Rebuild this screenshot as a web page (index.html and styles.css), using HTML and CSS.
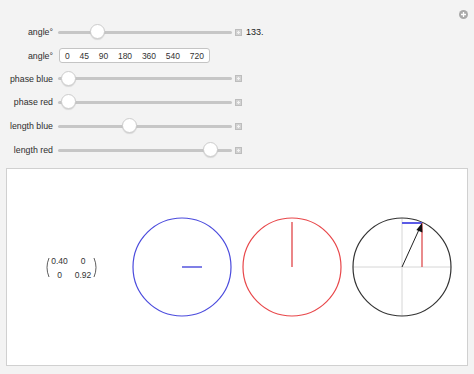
FILE: index.html
```html
<!DOCTYPE html>
<html lang="en">
<head>
    <meta charset="UTF-8">
    <title>Phase and length</title>
    <link rel="stylesheet" href="styles.css">
</head>
<body>
    <div class="panel">
        <span class="more-btn">
            <svg width="9" height="9" viewBox="0 0 9 9">
                <circle cx="4.5" cy="4.5" r="4.5" fill="#a9a9a9"/>
                <path d="M4.5 2v5M2 4.5h5" stroke="#fff" stroke-width="1.3"/>
            </svg>
        </span>

        <div class="controls">
            <div class="row row-tall">
                <label class="lbl">angle°</label>
                <div class="slider"><div class="track"></div><div class="thumb" style="left: 31.5px"></div></div>
                <span class="step"></span>
                <span class="val">133.</span>
            </div>
            <div class="row row-mid">
                <label class="lbl">angle°</label>
                <div class="setter">
                    <span>0</span><span>45</span><span>90</span><span>180</span><span>360</span><span>540</span><span>720</span>
                </div>
            </div>
            <div class="row row-mid">
                <label class="lbl">phase blue</label>
                <div class="slider"><div class="track"></div><div class="thumb" style="left: 2.5px"></div></div>
                <span class="step"></span>
            </div>
            <div class="row row-tall">
                <label class="lbl">phase red</label>
                <div class="slider"><div class="track"></div><div class="thumb" style="left: 2.5px"></div></div>
                <span class="step"></span>
            </div>
            <div class="row row-tall">
                <label class="lbl">length blue</label>
                <div class="slider"><div class="track"></div><div class="thumb" style="left: 63.5px"></div></div>
                <span class="step"></span>
            </div>
            <div class="row row-tall">
                <label class="lbl">length red</label>
                <div class="slider"><div class="track"></div><div class="thumb" style="left: 144.5px"></div></div>
                <span class="step"></span>
            </div>
        </div>

        <div class="output">
            <svg width="460" height="196" viewBox="0 0 460 196">
                <!-- matrix -->
                <path d="M42 89 Q38 98.5 42 108" fill="none" stroke="#333" stroke-width="0.8"/>
                <path d="M87 89 Q91 98.5 87 108" fill="none" stroke="#333" stroke-width="0.8"/>
                <text class="mat" x="52.5" y="94.5" text-anchor="middle">0.40</text>
                <text class="mat" x="76" y="94.5" text-anchor="middle">0</text>
                <text class="mat" x="52.5" y="108.5" text-anchor="middle">0</text>
                <text class="mat" x="76" y="108.5" text-anchor="middle">0.92</text>

                <!-- blue -->
                <circle cx="175" cy="98" r="49" fill="none" stroke="#4b4bdd" stroke-width="1.2"/>
                <line x1="175" y1="98" x2="195" y2="98" stroke="#3a3ad8" stroke-width="1.3"/>

                <!-- red -->
                <circle cx="285" cy="98" r="49" fill="none" stroke="#e8474a" stroke-width="1.2"/>
                <line x1="285" y1="98" x2="285" y2="53" stroke="#e04448" stroke-width="1.3"/>

                <!-- combined -->
                <line x1="346" y1="98" x2="444" y2="98" stroke="#d6d6d6" stroke-width="1"/>
                <line x1="395" y1="49" x2="395" y2="147" stroke="#d6d6d6" stroke-width="1"/>
                <circle cx="395" cy="98" r="49" fill="none" stroke="#333" stroke-width="1.2"/>
                <line x1="395" y1="54" x2="415" y2="54" stroke="#5b5be6" stroke-width="2"/>
                <line x1="415" y1="98" x2="415" y2="54" stroke="#e05a5c" stroke-width="1.4"/>
                <line x1="395" y1="98" x2="412.4" y2="59.8" stroke="#222" stroke-width="1"/>
                <path d="M415 54 L415.4 63.6 L409.4 60.9 Z" fill="#111"/>
            </svg>
        </div>
    </div>
</body>
</html>
```

FILE: styles.css
```css
body {
    margin: 0;
    background: #f3f3f3;
    font-family: 'Liberation Sans', Arial, sans-serif;
    font-size: 8.8px;
    color: #2e2e2e;
}

.panel {
    position: relative;
    width: 474px;
    height: 374px;
}

.more-btn {
    position: absolute;
    top: 10px;
    right: 6px;
    line-height: 0;
}

.controls {
    padding-top: 20px;
}

.row {
    display: flex;
    align-items: center;
}
.row-tall {
    height: 24px;
}
.row-mid {
    height: 23px;
}

.lbl {
    width: 53px;
    margin-right: 5px;
    text-align: right;
    white-space: nowrap;
}

.slider {
    position: relative;
    display: flex;
    align-items: center;
    width: 174px;
    height: 100%;
}
.track {
    flex: 1;
    height: 3px;
    border-radius: 2px;
    background: #c6c6c6;
}
.thumb {
    position: absolute;
    top: 50%;
    width: 15px;
    height: 15px;
    margin-top: -8px;
    box-sizing: border-box;
    border-radius: 50%;
    background: #fff;
    border: 1px solid #cdcdcd;
    box-shadow: 0 1px 1px rgba(0, 0, 0, 0.12);
}

.step {
    position: relative;
    width: 7px;
    height: 7px;
    margin-left: 3px;
    box-sizing: border-box;
    border: 1px solid #bdbdbd;
    background: #d2d2d2;
}
.step::before,
.step::after {
    content: "";
    position: absolute;
    background: #f2f2f2;
}
.step::before {
    left: 1px;
    top: 2px;
    width: 3px;
    height: 1px;
}
.step::after {
    left: 2px;
    top: 1px;
    width: 1px;
    height: 3px;
}

.val {
    margin-left: 4px;
    font-size: 9px;
    color: #222;
}

.setter {
    display: flex;
    align-items: center;
    height: 15px;
    margin-left: 1px;
    border: 1px solid #c4c4c4;
    border-radius: 3px;
    background: #fff;
    box-sizing: border-box;
}
.setter span {
    padding: 0 4.9px;
    font-size: 8.5px;
    color: #333;
}

.output {
    margin: 6px 6px 0;
    width: 462px;
    height: 198px;
    box-sizing: border-box;
    border: 1px solid #d0d0d0;
    background: #fff;
    line-height: 0;
}

.mat {
    font-family: 'Liberation Sans', Arial, sans-serif;
    font-size: 8.5px;
    fill: #333;
}
```
